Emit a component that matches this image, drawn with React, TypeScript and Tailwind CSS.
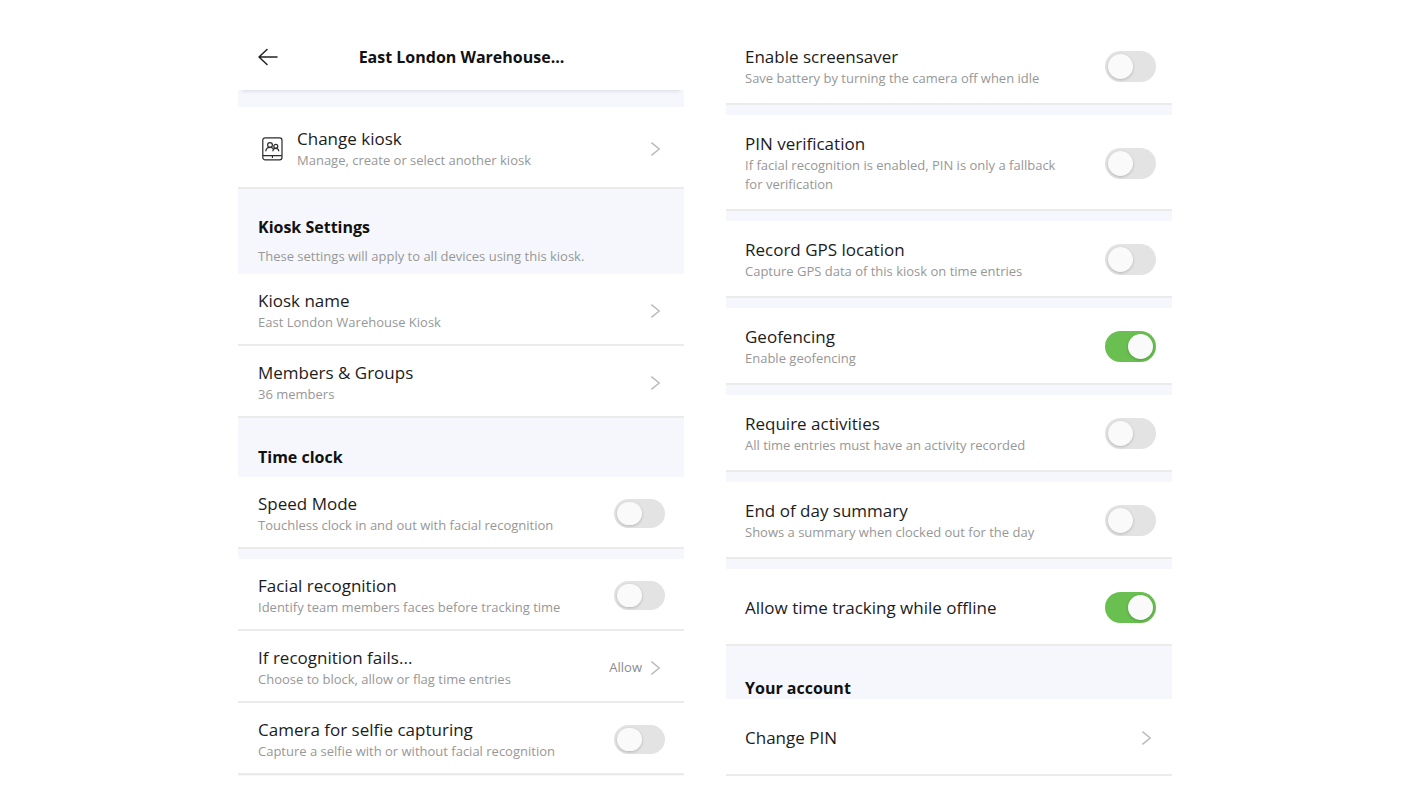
import { useId, type ReactNode } from "react";

type Side = "left" | "right";

function Chevron() {
  return (
    <svg className="mr-1 h-4 w-[11px] shrink-0" viewBox="0 0 11 16" fill="none" stroke="#b9b9b9" strokeWidth="1.4">
      <path d="M1.4 1.6 9.2 8 1.4 14.4" />
    </svg>
  );
}

function BackArrow() {
  return (
    <svg className="h-[18px] w-5" viewBox="0 0 20 18" fill="none" stroke="#222" strokeWidth="1.5" strokeLinecap="round" strokeLinejoin="round">
      <path d="M9 1.5 1 9l8 7.5M1 9h18" />
    </svg>
  );
}

function KioskIcon() {
  return (
    <svg className="h-6 w-[21px] shrink-0" viewBox="0 0 21 24" fill="none" stroke="#2b2b2b" strokeWidth="1.2">
      <rect x="0.8" y="0.8" width="19.2" height="22" rx="2.4" />
      <path d="M0.8 18.7h19.2M10.4 18.7v2.4" />
      <circle cx="8" cy="8" r="2.4" />
      <path d="M3.8 14.3c.1-2.5 1.7-4 4.2-4 1.5 0 2.7.6 3.4 1.6" />
      <circle cx="13.8" cy="9.3" r="2" />
      <path d="M10.8 14.3c.1-1.9 1.2-3 3-3s2.9 1.1 3 3" />
    </svg>
  );
}

const titleClass = "block text-[17px] leading-6 text-[#1c1c1c]";
const hintClass = "block text-[13px] leading-[19px] text-[#979797]";
const headingClass = "text-base leading-6 font-bold text-[#111]";

function RowText({ title, hint }: { title: string; hint?: string }) {
  return (
    <span className="block min-w-0 flex-1">
      <span className={titleClass}>{title}</span>
      {hint && <span className={hintClass}>{hint}</span>}
    </span>
  );
}

const rowClass: Record<Side, string> = {
  left: "flex min-h-[72px] w-full items-center border-b-2 border-[#ebebeb] bg-white pt-[3px] pr-[19px] pl-5 text-left",
  right: "flex min-h-[77px] w-full items-center border-b-2 border-[#ebebeb] bg-white pt-[17px] pr-4 pb-[15px] pl-[19px] text-left",
};

function NavRow({ side, title, hint, value, icon }: { side: Side; title: string; hint?: string; value?: string; icon?: ReactNode }) {
  return (
    <button type="button" className={rowClass[side]}>
      {icon && <span className="mr-3.5 ml-1">{icon}</span>}
      <RowText title={title} hint={hint} />
      {value && <span className="mr-2 text-[13px] text-[#8c8c8c]">{value}</span>}
      <Chevron />
    </button>
  );
}

const switchClass: Record<Side, string> = {
  left: "h-[29px] before:h-[23px]",
  right: "h-[31px] before:h-[25px]",
};

function ToggleRow({ side, title, hint, on = false }: { side: Side; title: string; hint?: string; on?: boolean }) {
  const id = useId();
  return (
    <div className={rowClass[side]}>
      <label htmlFor={id} className="min-w-0 flex-1 pr-8">
        <RowText title={title} hint={hint} />
      </label>
      <input
        id={id}
        type="checkbox"
        role="switch"
        defaultChecked={on}
        className={`flex w-[51px] shrink-0 appearance-none items-start rounded-full bg-[#e3e3e3] p-[3px] before:block before:w-[25px] before:rounded-full before:bg-[#fafafa] before:shadow-[0_1px_3px_rgba(0,0,0,0.2)] checked:justify-end checked:bg-[#69bf50] ${switchClass[side]}`}
      />
    </div>
  );
}

export default function App() {
  return (
    <main className="mx-auto grid max-w-[940px] grid-cols-2 gap-[42px] bg-white pl-1.5 font-['Open_Sans',sans-serif]">
      <section className="bg-[#f6f7fc]">
        <header className="flex h-[90px] items-center bg-white pt-6 pr-[19px] pl-5 shadow-[0_5px_4px_-4px_rgba(0,0,0,0.12)]">
          <button type="button" aria-label="Back" className="w-10">
            <BackArrow />
          </button>
          <h1 className="flex-1 pr-10 text-center text-base font-bold text-[#111]">East London Warehouse...</h1>
        </header>
        <div className="flex pt-[17px] *:min-h-[82px]">
          <NavRow side="left" title="Change kiosk" hint="Manage, create or select another kiosk" icon={<KioskIcon />} />
        </div>
        <div className="h-[85px] px-5 pt-[26px]">
          <h2 className={headingClass}>Kiosk Settings</h2>
          <p className="mt-2 text-[13px] leading-[19px] text-[#979797]">These settings will apply to all devices using this kiosk.</p>
        </div>
        <NavRow side="left" title="Kiosk name" hint="East London Warehouse Kiosk" />
        <NavRow side="left" title="Members & Groups" hint="36 members" />
        <div className="h-[59px] px-5 pt-[27px]">
          <h2 className={headingClass}>Time clock</h2>
        </div>
        <ToggleRow side="left" title="Speed Mode" hint="Touchless clock in and out with facial recognition" />
        <div className="mt-[10px]">
          <ToggleRow side="left" title="Facial recognition" hint="Identify team members faces before tracking time" />
          <NavRow side="left" title="If recognition fails..." hint="Choose to block, allow or flag time entries" value="Allow" />
          <ToggleRow side="left" title="Camera for selfie capturing" hint="Capture a selfie with or without facial recognition" />
        </div>
      </section>

      <section className="self-start bg-[#f6f7fc]">
        <div className="flex flex-col gap-[10px]">
          <div className="bg-white pt-7">
            <ToggleRow side="right" title="Enable screensaver" hint="Save battery by turning the camera off when idle" />
          </div>
          <ToggleRow side="right" title="PIN verification" hint="If facial recognition is enabled, PIN is only a fallback for verification" />
          <ToggleRow side="right" title="Record GPS location" hint="Capture GPS data of this kiosk on time entries" />
          <ToggleRow side="right" title="Geofencing" hint="Enable geofencing" on />
          <ToggleRow side="right" title="Require activities" hint="All time entries must have an activity recorded" />
          <ToggleRow side="right" title="End of day summary" hint="Shows a summary when clocked out for the day" />
          <ToggleRow side="right" title="Allow time tracking while offline" on />
        </div>
        <div className="h-[53px] px-[19px] pt-[30px]">
          <h2 className={headingClass}>Your account</h2>
        </div>
        <NavRow side="right" title="Change PIN" />
      </section>
    </main>
  );
}
